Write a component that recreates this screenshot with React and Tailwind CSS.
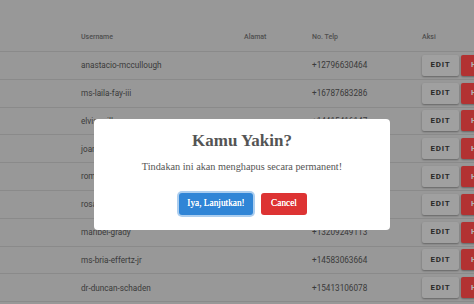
const users = [
  { username: 'anastacio-mccullough', alamat: '', telp: '+12796630464' },
  { username: 'ms-laila-fay-iii', alamat: '', telp: '+16787683286' },
  { username: 'elvis-mills', alamat: '', telp: '+14415416147' },
  { username: 'joana-kuhn', alamat: '', telp: '+17025541820' },
  { username: 'romaine-bode', alamat: '', telp: '+13605519372' },
  { username: 'rosalia-hand', alamat: '', telp: '+19174403318' },
  { username: 'maribel-grady', alamat: '', telp: '+13209249113' },
  { username: 'ms-bria-effertz-jr', alamat: '', telp: '+14583063664' },
  { username: 'dr-duncan-schaden', alamat: '', telp: '+15413106078' },
];

const cols = 'grid grid-cols-[81px_163px_68px_110px_1fr] items-center';

const ConfirmDialog = () => (
  <div className="fixed inset-0 bg-black/30">
    <div className="absolute left-[94px] top-[119px] w-[296px] rounded-[4px] bg-white pt-[12px] pb-[15px] text-center font-['Liberation_Serif',serif]">
      <h2 className="text-[17px] leading-[20px] font-bold text-[#545454]">Kamu Yakin?</h2>
      <p className="mt-[9px] text-[10.25px] leading-[14px] text-[#545454]">
        Tindakan ini akan menghapus secara permanent!
      </p>
      <div className="mt-[19px] flex justify-center gap-[6px]">
        <button className="h-[22px] w-[74px] mx-[2px] rounded-[3px] bg-[#3085d6] text-[9.3px] text-white ring-2 ring-[#3085d6]/40 [text-shadow:0_0_0.4px_#fff]">
          Iya, Lanjutkan!
        </button>
        <button className="h-[22px] w-[46px] rounded-[3px] bg-[#dd3333] text-[9.3px] text-white [text-shadow:0_0_0.4px_#fff]">
          Cancel
        </button>
      </div>
    </div>
  </div>
);

export default function App() {
  return (
    <div className="relative h-[304px] overflow-hidden bg-[#dadada] font-['Roboto',sans-serif]">
      <div className="w-[540px] pt-[24px]">
        <div className={`${cols} h-[28px] border-b border-[#c6c6c6] text-[7px] font-medium text-[#727272]`}>
          <div />
          <div>Username</div>
          <div>Alamat</div>
          <div>No. Telp</div>
          <div>Aksi</div>
        </div>
        {users.map((u) => (
          <div
            key={u.username}
            className={`${cols} h-[27.8px] border-b border-[#c6c6c6] text-[8.2px] text-[#555]`}
          >
            <div />
            <div>{u.username}</div>
            <div>{u.alamat}</div>
            <div>{u.telp}</div>
            <div className="flex gap-[2px]">
              <button className="h-[21px] w-[37px] rounded-[2px] bg-[#e6e6e6] text-[8px] font-bold tracking-[0.1em] text-[#3a3a3a] shadow-[0_1px_2px_rgba(0,0,0,0.35)]">
                EDIT
              </button>
              <button className="h-[21px] w-[52px] rounded-[2px] bg-[#ff4848] pl-[10px] text-left text-[8px] font-bold tracking-[0.1em] text-white shadow-[0_1px_2px_rgba(0,0,0,0.35)]">
                HAPUS
              </button>
            </div>
          </div>
        ))}
      </div>
      <ConfirmDialog />
    </div>
  );
}
